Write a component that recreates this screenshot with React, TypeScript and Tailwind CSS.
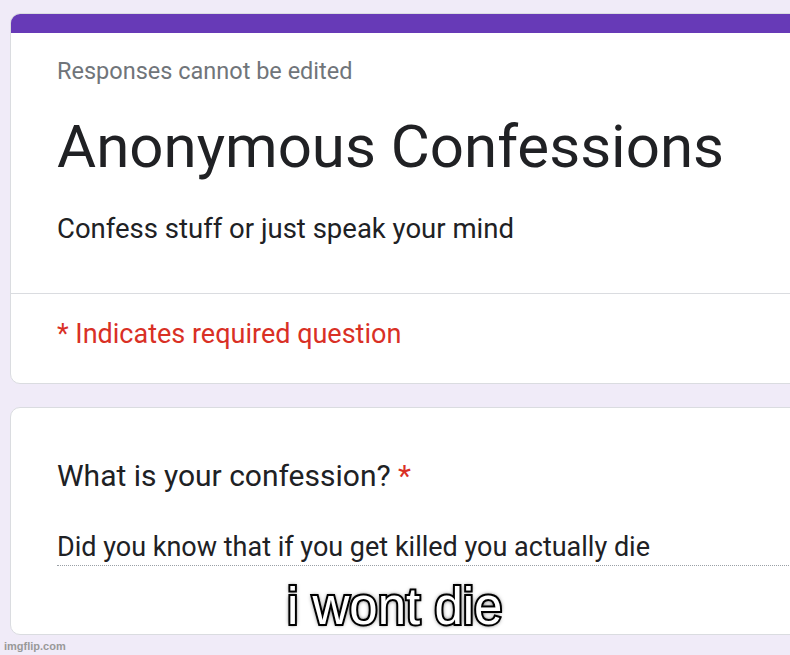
const App = () => {
  return (
    <div className="relative w-[790px] h-[655px] overflow-hidden bg-[#f0ebf8] font-['Roboto',sans-serif] text-[#202124]">
      <div className="pt-[13px] pl-[10px]">
        <div className="w-[820px] rounded-[10px] bg-white border border-[#dadce0] overflow-hidden">
          <div className="h-[19px] bg-[#673ab7]" />
          <div className="pl-[46px] pt-[24px]">
            <div className="text-[23.5px] leading-[28px] text-[#70757a]">Responses cannot be edited</div>
            <div className="mt-[27px] text-[60px] leading-[70px]">Anonymous Confessions</div>
            <div className="mt-[31px] text-[27.5px] leading-[32px]">Confess stuff or just speak your mind</div>
          </div>
          <div className="mt-[48px] border-t border-[#dadce0]" />
          <div className="pl-[46px] pt-[24px] pb-[33px] text-[27px] leading-[32px] text-[#d93025]">
            * Indicates required question
          </div>
        </div>
        <div className="mt-[23px] w-[820px] h-[228px] rounded-[10px] bg-white border border-[#dadce0]">
          <div className="pl-[46px] pt-[50px]">
            <div className="text-[30px] leading-[36px]">
              What is your confession? <span className="text-[#d93025]">*</span>
            </div>
            <div className="mt-[35px] text-[27px] leading-[36px] border-b border-dotted border-[#9aa0a6]">
              Did you know that if you get killed you actually die
            </div>
          </div>
        </div>
      </div>
      <div className="absolute left-[287px] top-[577px] font-['Liberation_Sans',Arial,sans-serif] text-[51px] leading-[60px] text-white [-webkit-text-stroke:4px_#000] [paint-order:stroke_fill] [text-shadow:0_0_3px_#000,0_0_5px_#000]">
        i wont die
      </div>
      <div className="absolute left-[4px] top-[638px] font-['Liberation_Sans',Arial,sans-serif] text-[11px] font-bold leading-[16px] text-[#999999]">
        imgflip.com
      </div>
    </div>
  );
};

export default App;
